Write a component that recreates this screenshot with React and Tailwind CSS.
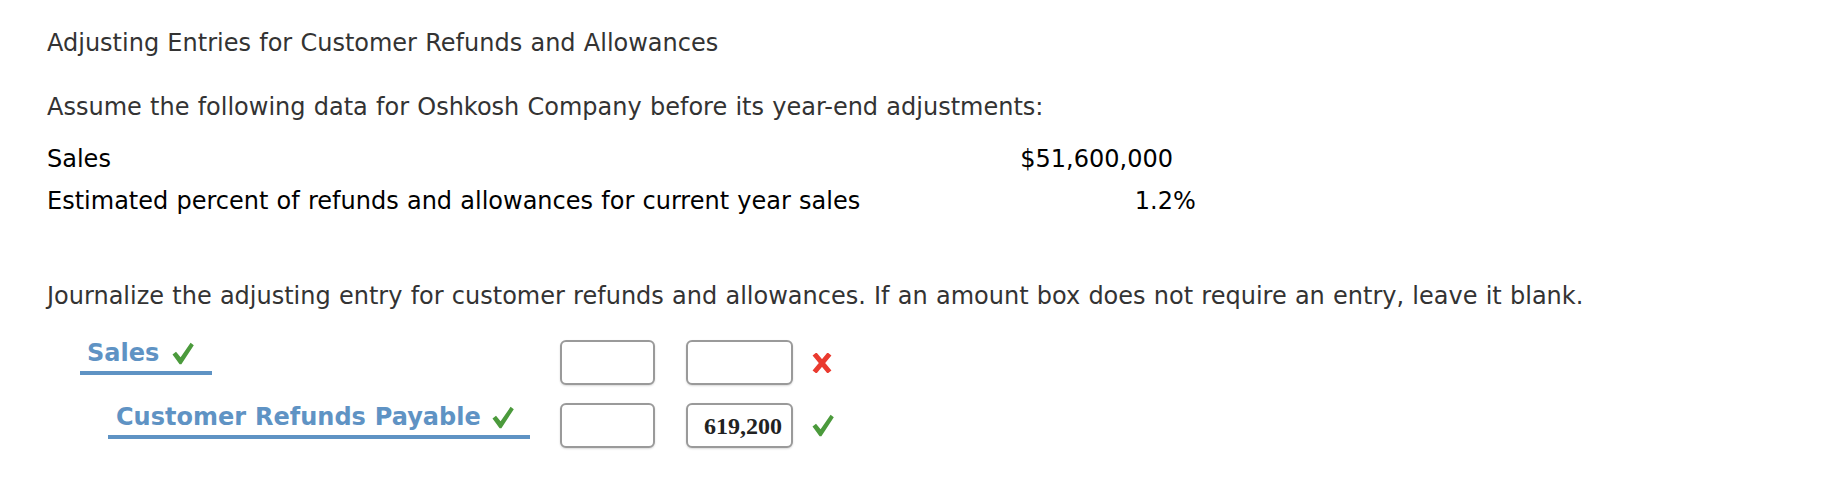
import React from 'react';

const font = { fontFamily: '"DejaVu Sans", Verdana, sans-serif' };

// heavy check mark, short left arm + long right arm
const Check = () => (
  <svg viewBox="0 0 22 23" className="w-[22px] h-[23px]">
    <path d="M0.5 12.5 L4 9.8 L8.6 15.2 L18.6 0.8 L21.8 3.2 L9.4 22.2 L7.6 22.2 Z" fill="#4b9a3c" />
  </svg>
);

const Cross = () => (
  <svg viewBox="0 0 20 20" className="w-[20px] h-[20px]">
    <path d="M2.5 1 L17.5 19 M17.5 1 L2.5 19" fill="none" stroke="#ea3a2f" strokeWidth="5" />
  </svg>
);

const AmountBox = ({ value, wide }) => (
  <div
    className={`${wide ? 'w-[107px]' : 'w-[95px]'} h-[45px] border-2 border-[#9a9a9a] rounded-[6px] bg-white shadow-[0_1px_2px_rgba(0,0,0,0.15)] flex items-center justify-end pr-[9px] text-[24px] font-bold text-[#222]`}
    style={{ fontFamily: '"Liberation Serif", "Times New Roman", serif' }}
  >
    {value}
  </div>
);

export default function App() {
  return (
    <div className="w-[1822px] h-[480px] bg-white pl-[47px] pt-[28px] text-[24px] leading-[30px] [word-spacing:0.6px]" style={font}>
      <h1 className="text-[#333]">Adjusting Entries for Customer Refunds and Allowances</h1>

      <p className="mt-[34px] text-[#333]">Assume the following data for Oshkosh Company before its year-end adjustments:</p>

      {/* data table */}
      <div className="mt-[22px] text-black">
        <div className="flex">
          <div className="w-[826px]">Sales</div>
          <div className="w-[300px] text-right">$51,600,000</div>
        </div>
        <div className="flex mt-[12px]">
          <div className="w-[826px]">Estimated percent of refunds and allowances for current year sales</div>
          <div className="w-[300px] text-right">1.2</div>
          <div>%</div>
        </div>
      </div>

      <p className="mt-[65px] text-[#333]">Journalize the adjusting entry for customer refunds and allowances. If an amount box does not require an entry, leave it blank.</p>

      {/* journal rows */}
      <div className="mt-[27px]">
        <div className="flex items-start">
          <div className="w-[513px]">
            <div className="ml-[33px] inline-flex items-center gap-[13px] pl-[7px] pr-[18px] pb-[4px] border-b-4 border-[#5f93c4] leading-[28px] font-bold text-[#5f93c4]">
              Sales
              <Check />
            </div>
          </div>
          <div className="mt-[2px] flex items-center">
            <AmountBox />
            <div className="ml-[31px]"><AmountBox wide /></div>
            <div className="ml-[19px]"><Cross /></div>
          </div>
        </div>

        <div className="flex items-start mt-[17px]">
          <div className="w-[513px]">
            <div className="ml-[61px] inline-flex items-center gap-[11px] pl-[8px] pr-[16px] pb-[4px] border-b-4 border-[#5f93c4] leading-[28px] font-bold text-[#5f93c4]">
              Customer Refunds Payable
              <Check />
            </div>
          </div>
          <div className="mt-[1px] flex items-center">
            <AmountBox />
            <div className="ml-[31px]"><AmountBox wide value="619,200" /></div>
            <div className="ml-[19px]"><Check /></div>
          </div>
        </div>
      </div>
    </div>
  );
}
